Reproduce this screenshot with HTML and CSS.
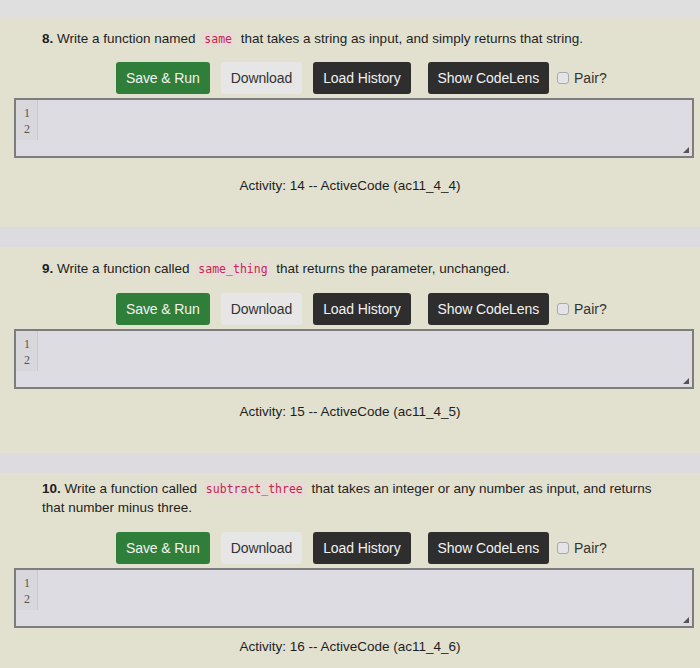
FILE: index.html
```html
<!DOCTYPE html>
<html>
<head>
<meta charset="utf-8">
<link rel="stylesheet" href="styles.css">
</head>
<body>
<div class="band band-top"></div>
<section class="q q1">
  <p class="prompt"><b>8.</b> Write a function named <code>same</code> that takes a string as input, and simply returns that string.</p>
  <div class="toolbar">
    <span class="btn btn-green">Save &amp; Run</span>
    <span class="btn btn-light">Download</span>
    <span class="btn btn-dark">Load History</span>
    <span class="btn btn-dark btn-lens">Show CodeLens</span>
    <span class="pair"><span class="box"></span>Pair?</span>
  </div>
  <div class="editor"><div class="gutter"><div>1</div><div>2</div></div><span class="grip"></span></div>
  <p class="activity">Activity: 14 -- ActiveCode (ac11_4_4)</p>
</section>
<div class="band"></div>
<section class="q q2">
  <p class="prompt"><b>9.</b> Write a function called <code>same_thing</code> that returns the parameter, unchanged.</p>
  <div class="toolbar">
    <span class="btn btn-green">Save &amp; Run</span>
    <span class="btn btn-light">Download</span>
    <span class="btn btn-dark">Load History</span>
    <span class="btn btn-dark btn-lens">Show CodeLens</span>
    <span class="pair"><span class="box"></span>Pair?</span>
  </div>
  <div class="editor"><div class="gutter"><div>1</div><div>2</div></div><span class="grip"></span></div>
  <p class="activity">Activity: 15 -- ActiveCode (ac11_4_5)</p>
</section>
<div class="band"></div>
<section class="q q3">
  <p class="prompt"><b>10.</b> Write a function called <code>subtract_three</code> that takes an integer or any number as input, and returns<br>that number minus three.</p>
  <div class="toolbar">
    <span class="btn btn-green">Save &amp; Run</span>
    <span class="btn btn-light">Download</span>
    <span class="btn btn-dark">Load History</span>
    <span class="btn btn-dark btn-lens">Show CodeLens</span>
    <span class="pair"><span class="box"></span>Pair?</span>
  </div>
  <div class="editor"><div class="gutter"><div>1</div><div>2</div></div><span class="grip"></span></div>
  <p class="activity">Activity: 16 -- ActiveCode (ac11_4_6)</p>
</section>
</body>
</html>
```
FILE: styles.css
```css
html, body {
  margin: 0;
  padding: 0;
}
body {
  background: #e2e1d0;
  font-family: "Liberation Sans", Arial, sans-serif;
  font-size: 13.5px;
  color: #1e1e1e;
  height: 668px;
  overflow: hidden;
}
.band {
  height: 20px;
  background: #dcdce0;
}
.band-top {
  height: 18px;
  background: #dfdfe0;
}
.q {
  padding-top: 11px;
  padding-bottom: 32px;
}
.q2 { padding-top: 12px; }
.q3 { padding-top: 6px; padding-bottom: 0; }
.prompt {
  margin: 0 20px 0 42px;
  line-height: 19px;
}
.prompt b { font-weight: bold; }
code {
  font-family: "DejaVu Sans Mono", monospace;
  font-size: 11.5px;
  line-height: 1;
  color: #c7254e;
  background: #e6dcd6;
  padding: 1px 3px;
  margin: 0 2px;
  border-radius: 3px;
}
.toolbar {
  display: flex;
  align-items: center;
  gap: 11px;
  margin: 14px 0 0 116px;
}
.q2 .toolbar, .q3 .toolbar { margin-top: 15px; }
.btn {
  display: inline-flex;
  align-items: center;
  height: 32px;
  padding: 0 10px;
  font-size: 14px;
  letter-spacing: -0.1px;
  border-radius: 3px;
  box-sizing: border-box;
}
.btn-green {
  background: #2f7f3a;
  color: #f2f2f2;
}
.btn-light {
  background: #e6e6e6;
  color: #333;
}
.btn-dark {
  background: #2e2e2e;
  color: #f2f2f2;
}
.btn-lens { margin-left: 6px; }
.pair {
  display: inline-flex;
  align-items: center;
  gap: 5px;
  margin-left: -3px;
  font-size: 14px;
  color: #333;
}
.box {
  width: 12px;
  height: 12px;
  background: #e4e4e8;
  border: 1px solid #a9a9ad;
  border-radius: 3px;
  box-sizing: border-box;
}
.editor {
  position: relative;
  display: flex;
  height: 60px;
  margin: 4px 6px 0 14px;
  background: #dddce2;
  border: 2px solid #7d7d80;
  box-sizing: border-box;
}
.gutter {
  width: 22px;
  background: #d8d7dc;
  border-right: 1px solid #c9c8cd;
  padding-top: 5px;
  font-family: "Liberation Serif", serif;
  font-size: 12px;
  line-height: 16px;
  color: #555;
  text-align: right;
  box-sizing: border-box;
  padding-right: 7px;
  height: 40px;
}
.grip {
  position: absolute;
  right: 3px;
  bottom: 3px;
  width: 0;
  height: 0;
  border-left: 6px solid transparent;
  border-bottom: 6px solid #555;
}
.activity {
  margin: 19px 0 0;
  text-align: center;
  line-height: 18px;
}
.q2 .activity { margin-top: 14px; }
.q3 .activity { margin-top: 10px; }
```
